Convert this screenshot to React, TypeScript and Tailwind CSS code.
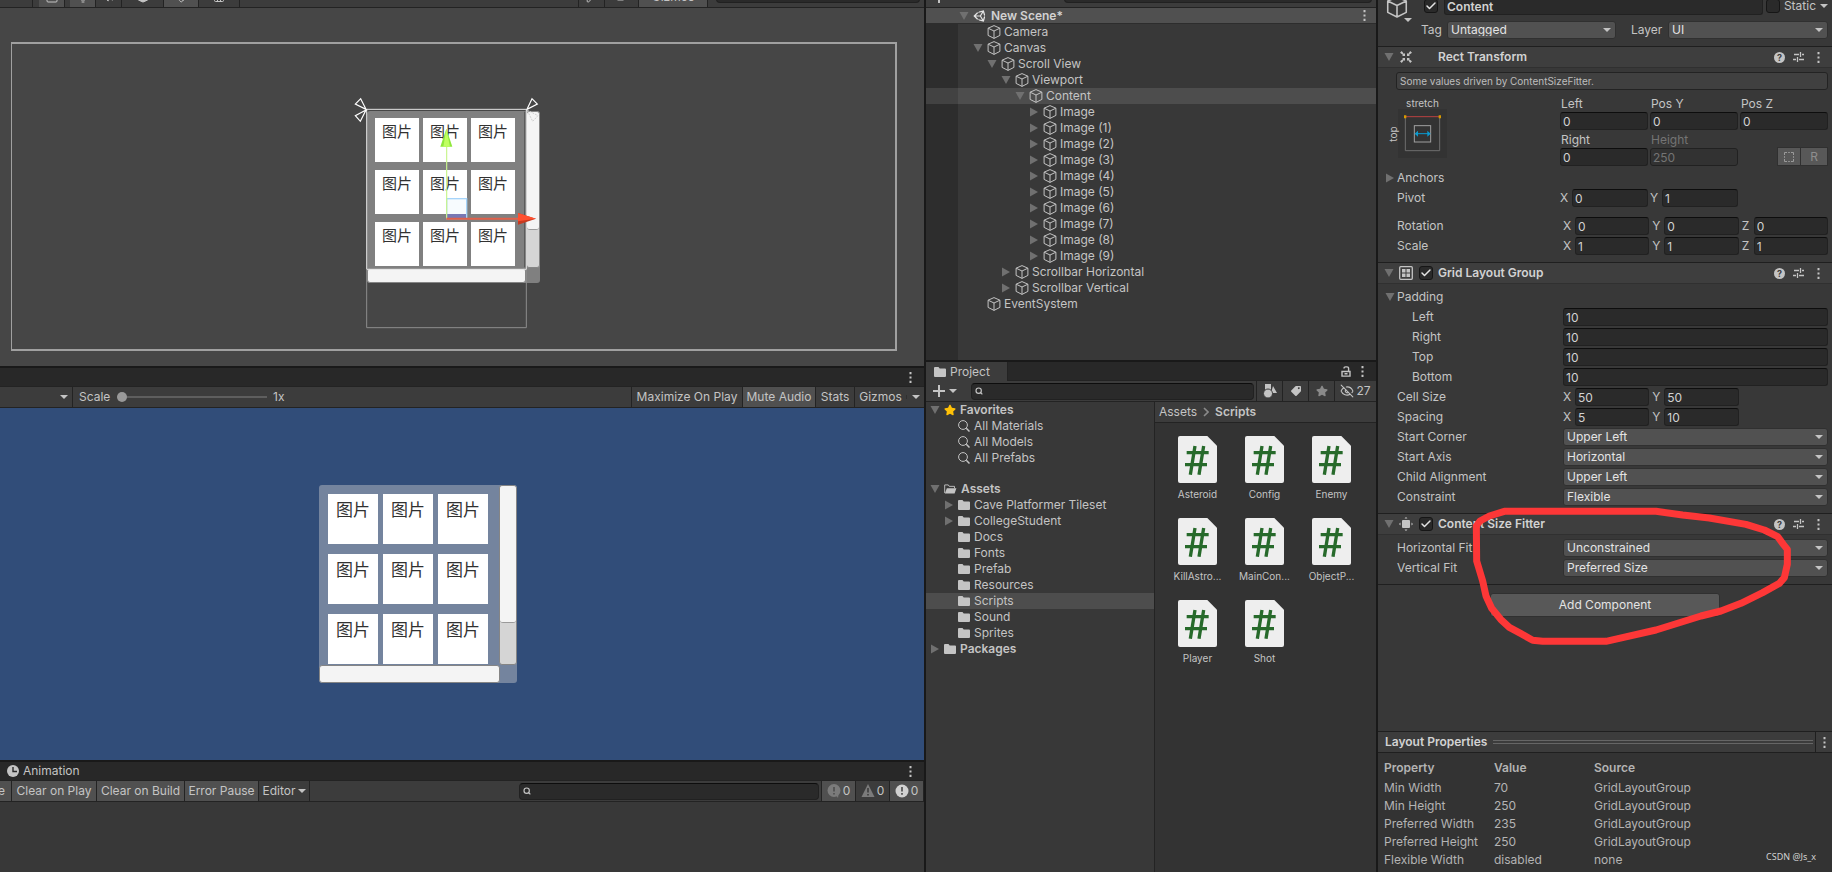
import type { ReactNode } from 'react';
import { Check, EyeOff, Grid3x3, Layers, Lightbulb, Magnet, Search, Volume2, Wrench, Video, Tv } from 'lucide-react';
import { FaUnity, FaStar, FaTag } from 'react-icons/fa';

interface TreeNode {
  name: string;
  depth: number;
  state?: 'open' | 'closed';
  selected?: boolean;
}

interface ProjectNode extends TreeNode {
  icon: 'star' | 'search' | 'folder' | 'open';
  bold?: boolean;
}

const HIERARCHY: TreeNode[] = [
  { name: 'Camera', depth: 0 },
  { name: 'Canvas', depth: 0, state: 'open' },
  { name: 'Scroll View', depth: 1, state: 'open' },
  { name: 'Viewport', depth: 2, state: 'open' },
  { name: 'Content', depth: 3, state: 'open', selected: true },
  { name: 'Image', depth: 4, state: 'closed' },
  { name: 'Image (1)', depth: 4, state: 'closed' },
  { name: 'Image (2)', depth: 4, state: 'closed' },
  { name: 'Image (3)', depth: 4, state: 'closed' },
  { name: 'Image (4)', depth: 4, state: 'closed' },
  { name: 'Image (5)', depth: 4, state: 'closed' },
  { name: 'Image (6)', depth: 4, state: 'closed' },
  { name: 'Image (7)', depth: 4, state: 'closed' },
  { name: 'Image (8)', depth: 4, state: 'closed' },
  { name: 'Image (9)', depth: 4, state: 'closed' },
  { name: 'Scrollbar Horizontal', depth: 2, state: 'closed' },
  { name: 'Scrollbar Vertical', depth: 2, state: 'closed' },
  { name: 'EventSystem', depth: 0 },
];

const FAVORITES: ProjectNode[] = [
  { name: 'Favorites', depth: 0, state: 'open', icon: 'star', bold: true },
  { name: 'All Materials', depth: 1, icon: 'search' },
  { name: 'All Models', depth: 1, icon: 'search' },
  { name: 'All Prefabs', depth: 1, icon: 'search' },
];

const FOLDERS: ProjectNode[] = [
  { name: 'Assets', depth: 0, state: 'open', icon: 'open', bold: true },
  { name: 'Cave Platformer Tileset', depth: 1, state: 'closed', icon: 'folder' },
  { name: 'CollegeStudent', depth: 1, state: 'closed', icon: 'folder' },
  { name: 'Docs', depth: 1, icon: 'folder' },
  { name: 'Fonts', depth: 1, icon: 'folder' },
  { name: 'Prefab', depth: 1, icon: 'folder' },
  { name: 'Resources', depth: 1, icon: 'folder' },
  { name: 'Scripts', depth: 1, icon: 'folder', selected: true },
  { name: 'Sound', depth: 1, icon: 'folder' },
  { name: 'Sprites', depth: 1, icon: 'folder' },
  { name: 'Packages', depth: 0, state: 'closed', icon: 'folder', bold: true },
];

const SCRIPTS = ['Asteroid', 'Config', 'Enemy', 'KillAstro...', 'MainCon...', 'ObjectP...', 'Player', 'Shot'];

const LAYOUT_PROPS = [
  ['Min Width', '70', 'GridLayoutGroup'],
  ['Min Height', '250', 'GridLayoutGroup'],
  ['Preferred Width', '235', 'GridLayoutGroup'],
  ['Preferred Height', '250', 'GridLayoutGroup'],
  ['Flexible Width', 'disabled', 'none'],
];

export default function App() {
  return (
    <div className="flex h-screen overflow-hidden bg-[#191919] font-['Inter','Noto_Sans_CJK_SC',sans-serif] text-xs leading-4 text-[#c4c4c4]">
      <div className="flex min-w-0 flex-1 flex-col">
        <SceneView />
        <GameView />
        <ConsolePanel />
      </div>
      <div className="mx-0.5 flex w-[450px] shrink-0 flex-col">
        <Hierarchy />
        <Project />
      </div>
      <Inspector />
    </div>
  );
}

/* ---------- left column ---------- */

function SceneView() {
  return (
    <section className="flex min-h-0 shrink grow basis-[366px] flex-col">
      <div className="flex h-2 shrink-0 items-end overflow-hidden border-b border-[#232323] bg-[#3c3c3c]">
        <ToolButton className="w-[33px]" />
        <div className="w-1.5" />
        <ToolButton className="w-[26px] bg-[#505050]"><Tv size={12} /></ToolButton>
        <div className="w-[5px]" />
        <ToolButton className="w-[26px] bg-[#505050]"><Lightbulb size={12} fill="#c4c4c4" /></ToolButton>
        <ToolButton className="w-[26px]"><Volume2 size={12} /></ToolButton>
        <ToolButton className="w-[42px]"><Layers size={12} fill="#c4c4c4" /></ToolButton>
        <ToolButton className="w-[35px] bg-[#505050]"><Magnet size={12} /></ToolButton>
        <ToolButton className="w-[41px]"><Grid3x3 size={12} /></ToolButton>
        <div className="h-[21px] flex-1 border-r border-[#232323]" />
        <ToolButton className="w-[26px]"><Wrench size={12} /></ToolButton>
        <ToolButton className="w-[34px]"><Video size={12} /></ToolButton>
        <ToolButton className="w-[69px] bg-[#505050]">Gizmos</ToolButton>
        <div className="ml-2 mr-1 h-[21px] w-[204px]">
          <SearchBox label="Search scene" placeholder="All" />
        </div>
      </div>
      <div className="relative flex-1 overflow-hidden bg-[#464646]">
        <div className="absolute bottom-[15px] left-[11px] right-[27px] top-[34px] border-2 border-l border-[#a0a0a0]" />
        <UiScrollView
          className="absolute left-[367px] top-[103px] h-[172px] w-[173px] bg-[#808080]"
          gridClass="grid-cols-[44px_44px_44px] auto-rows-[44px] gap-x-1 gap-y-2 pl-2 pt-[7px]"
          cellClass="text-[15px] leading-[25px]"
          barClass="w-[14px]"
          handleClass="h-[118px]"
          footClass="h-[15px]"
          footEnd="w-[14px]"
        />
        <SceneGizmo />
      </div>
    </section>
  );
}

function GameView() {
  return (
    <section className="flex min-h-0 shrink grow basis-[394px] flex-col border-t-2 border-[#191919]">
      <div className="flex h-[19px] shrink-0 items-center justify-end border-b border-[#232323] bg-[#282828] pr-3">
        <Dots />
      </div>
      <div className="flex h-[21px] shrink-0 items-center border-b border-[#232323] bg-[#3c3c3c]">
        <div className="flex h-full w-[73px] items-center justify-end border-r border-[#232323] pr-1">
          <DownArrow />
        </div>
        <label htmlFor="scale" className="ml-1.5 w-[38px]">Scale</label>
        <input
          id="scale"
          type="range"
          defaultValue={0}
          className="h-4 w-[150px] appearance-none bg-transparent [&::-webkit-slider-runnable-track]:h-0.5 [&::-webkit-slider-runnable-track]:bg-[#5e5e5e] [&::-webkit-slider-thumb]:-mt-1 [&::-webkit-slider-thumb]:size-2.5 [&::-webkit-slider-thumb]:appearance-none [&::-webkit-slider-thumb]:rounded-full [&::-webkit-slider-thumb]:bg-[#999999]"
        />
        <span className="ml-1.5">1x</span>
        <div className="h-full flex-1 border-r border-[#232323]" />
        <BarButton className="w-[111px]">Maximize On Play</BarButton>
        <BarButton className="w-[73px] bg-[#505050]">Mute Audio</BarButton>
        <BarButton className="w-[39px]">Stats</BarButton>
        <button className="w-[51px]">Gizmos</button>
        <div className="flex w-[18px] items-center justify-center border-l border-[#303030]">
          <DownArrow />
        </div>
      </div>
      <div className="relative flex-1 overflow-hidden bg-[#314d79]">
        <UiScrollView
          className="absolute left-[319px] top-[77px] h-[198px] w-[198px] bg-[#74849e]"
          gridClass="grid-cols-[50px_50px_50px] auto-rows-[50px] gap-x-[5px] gap-y-2.5 pl-[9px] pt-[9px]"
          cellClass="text-[17px] leading-[30px]"
          barClass="w-[18px]"
          handleClass="h-[137px]"
          footClass="h-[18px]"
          footEnd="w-[17px]"
        />
      </div>
    </section>
  );
}

function ConsolePanel() {
  return (
    <section className="flex h-28 shrink-0 flex-col border-t-2 border-[#191919] bg-[#383838]">
      <div className="flex h-[19px] shrink-0 items-center border-b border-[#232323] bg-[#282828] pl-[7px] pr-3">
        <svg viewBox="0 0 12 12" className="size-3">
          <circle cx="6" cy="6" r="6" fill="#c4c4c4" />
          <path d="M6 2v4.5h4" stroke="#282828" strokeWidth="1.4" fill="none" />
        </svg>
        <span className="ml-1">Animation</span>
        <div className="flex-1" />
        <Dots />
      </div>
      <div className="flex h-[21px] shrink-0 items-center border-b border-[#232323] bg-[#3c3c3c]">
        <button className="flex h-full w-3 items-center justify-end overflow-hidden border-r border-[#232323] bg-[#505050] pr-1.5">Collapse</button>
        <BarButton className="w-[85px] bg-[#505050]">Clear on Play</BarButton>
        <BarButton className="w-[88px] bg-[#505050]">Clear on Build</BarButton>
        <BarButton className="w-[74px] bg-[#505050]">Error Pause</BarButton>
        <BarButton className="w-[51px] gap-0.5">Editor<DownArrow /></BarButton>
        <div className="flex-1" />
        <div className="w-[300px]">
          <SearchBox label="Search console" />
        </div>
        <div className="ml-0.5 h-full border-l border-[#232323]" />
        <BarButton className="w-[34px] gap-0.5 bg-[#505050]">
          <svg viewBox="0 0 14 14" className="size-3.5">
            <circle cx="7" cy="6.5" r="6.5" fill="#7b7b7b" />
            <path d="M9 11l2 3 .5-4z" fill="#7b7b7b" />
            <path d="M7 3v4.5M7 9v1.6" stroke="#505050" strokeWidth="1.7" />
          </svg>
          0
        </BarButton>
        <BarButton className="w-[34px] gap-0.5">
          <svg viewBox="0 0 14 14" className="size-3.5">
            <path d="M7 0l6.5 13H.5z" fill="#7b7b7b" />
            <path d="M7 4v4.5M7 10v1.6" stroke="#3c3c3c" strokeWidth="1.6" />
          </svg>
          0
        </BarButton>
        <BarButton className="w-[34px] gap-0.5 bg-[#505050]">
          <svg viewBox="0 0 14 14" className="size-3.5">
            <circle cx="7" cy="7" r="6.5" fill="#d2d2d2" />
            <path d="M7 3v4.5M7 9v1.8" stroke="#505050" strokeWidth="1.7" />
          </svg>
          0
        </BarButton>
      </div>
    </section>
  );
}

interface UiScrollViewProps {
  className: string;
  gridClass: string;
  cellClass: string;
  barClass: string;
  handleClass: string;
  footClass: string;
  footEnd: string;
}

function UiScrollView({ className, gridClass, cellClass, barClass, handleClass, footClass, footEnd }: UiScrollViewProps) {
  return (
    <div className={`flex flex-col overflow-hidden rounded-[3px] text-[#323232] ${className}`}>
      <div className="flex min-h-0 flex-1">
        <div className={`grid flex-1 content-start ${gridClass}`}>
          {Array.from({ length: 9 }, (_, i) => (
            <div key={i} className={`bg-white text-center font-['Noto_Sans_CJK_SC',sans-serif] ${cellClass}`}>图片</div>
          ))}
        </div>
        <div className={`rounded-[3px] border border-[#858585] bg-[#d5d5d5] ${barClass}`}>
          <div className={`rounded-[3px] border-b border-[#9a9a9a] bg-[#f4f4f4] ${handleClass}`} />
        </div>
      </div>
      <div className="flex">
        <div className={`flex-1 rounded-[3px] border border-[#858585] bg-[#f4f4f4] ${footClass}`} />
        <div className={footEnd} />
      </div>
    </div>
  );
}

// Rect outline, anchor handles and the move gizmo of the selected object
function SceneGizmo() {
  return (
    <svg viewBox="0 0 660 780" className="absolute left-[340px] top-[72px] h-[260px] w-[220px]" fill="none">
      <path d="M80 570V743H559V570" stroke="#8c8c8c" strokeWidth="3" />
      <path d="M80 88V568H559V88Z" stroke="#e4e4e4" strokeWidth="3" />
      <path d="M554 95V562" stroke="#555" strokeWidth="3" />
      <g stroke="#fff" strokeWidth="3.5">
        <path d="M78 88L62 56 46 72Z" />
        <path d="M78 90L46 107 61 124Z" />
        <path d="M561 88L576 56 592 72Z" />
      </g>
      <path d="M561 90L594 107 578 124Z" stroke="#cfcfcf" strokeWidth="3" strokeDasharray="6 3" />
      <rect x="320" y="356" width="60" height="60" fill="#bfe0fa" fillOpacity=".12" stroke="#a6d4fa" strokeWidth="4" />
      <rect x="321" y="402" width="57" height="13" fill="#7878b4" />
      <path d="M320 200V416" stroke="#c8f58c" strokeWidth="3.5" />
      <path d="M319 146L301 200H337Z" fill="#8fe83c" />
      <path d="M319 146L310 200H330Z" fill="#c0ff60" />
      <path d="M319 416H536" stroke="#e0604a" strokeWidth="6" />
      <path d="M588 416L534 399V434Z" fill="#c83a20" />
      <path d="M588 416L534 399V424Z" fill="#ff5030" />
    </svg>
  );
}

/* ---------- middle column ---------- */

function Hierarchy() {
  return (
    <section className="flex h-[360px] shrink-0 flex-col bg-[#383838]">
      <div className="flex h-2 shrink-0 items-end overflow-hidden border-b border-[#232323] bg-[#3c3c3c]">
        <button aria-label="Create" className="ml-[7px] mb-1"><PlusIcon /></button>
        <div className="flex-1" />
        <div className="mr-1 h-[21px] w-[308px]">
          <SearchBox label="Search hierarchy" placeholder="All" />
        </div>
      </div>
      <div className="flex h-4 shrink-0 items-center border-b border-[#2d2d2d] bg-[#505050] pl-[33px] pr-2.5">
        <Foldout state="open" />
        <FaUnity className="size-3.5 text-[#e4e4e4]" />
        <span className="ml-1 font-semibold text-[#d2d2d2]">New Scene*</span>
        <div className="flex-1" />
        <Dots />
      </div>
      <div className="flex-1 bg-[linear-gradient(to_right,#2d2d2d_32px,#383838_32px)]">
        {HIERARCHY.map(node => (
          <div
            key={node.name}
            className={node.selected
              ? 'flex h-4 items-center bg-[linear-gradient(to_right,#424242_32px,#4d4d4d_32px)]'
              : 'flex h-4 items-center'}
            style={{ paddingLeft: 47 + node.depth * 14 }}
          >
            <Foldout state={node.state} />
            <CubeIcon className="size-3.5" />
            <span className="ml-[3px]">{node.name}</span>
          </div>
        ))}
      </div>
    </section>
  );
}

function Project() {
  return (
    <section className="flex min-h-0 flex-1 flex-col border-t-2 border-[#191919] bg-[#383838]">
      <div className="flex h-[19px] shrink-0 items-center bg-[#282828] pr-3">
        <div className="flex h-full w-[82px] items-center border-r border-[#232323] bg-[#3c3c3c] pl-2">
          <FolderIcon />
          <span className="ml-1">Project</span>
        </div>
        <div className="flex-1 self-stretch border-b border-[#232323]" />
        <svg viewBox="0 0 10 11" className="mr-2.5 h-[11px] w-2.5" fill="none" stroke="#c4c4c4" strokeWidth="1.4">
          <path d="M1 5.5h8v4.6H1zM7.6 5.5V2.4q0-1.5-1.6-1.5H4.6Q3 .9 3 2.4M3.5 7.8h3" />
        </svg>
        <Dots />
      </div>
      <div className="flex h-[21px] shrink-0 items-center border-b border-[#232323] bg-[#3c3c3c]">
        <button aria-label="Create asset" className="ml-[7px] flex w-[38px] items-center gap-1"><PlusIcon /><DownArrow /></button>
        <div className="flex-1">
          <SearchBox label="Search project" />
        </div>
        <div className="ml-0.5 h-full border-l border-[#232323]" />
        <BarButton className="w-[26px]">
          <svg viewBox="0 0 14 14" className="size-3.5" fill="#c4c4c4">
            <path d="M2 0h6v6H2zM10 2l4 7H8z" />
            <circle cx="5" cy="9.5" r="4.5" stroke="#3c3c3c" />
          </svg>
        </BarButton>
        <BarButton className="w-[26px]"><FaTag className="size-2.5 scale-x-[-1]" /></BarButton>
        <BarButton className="w-[26px]"><FaStar className="size-3 text-[#8a8a8a]" /></BarButton>
        <button className="flex w-[41px] items-center justify-center gap-0.5"><EyeOff size={14} strokeWidth={1.8} />27</button>
      </div>
      <div className="flex min-h-0 flex-1">
        <div className="w-[229px] border-r border-[#232323]">
          {FAVORITES.map(n => <ProjectRow key={n.name} node={n} />)}
          <div className="h-[15px]" />
          {FOLDERS.map(n => <ProjectRow key={n.name} node={n} />)}
        </div>
        <div className="flex-1 bg-[#333333]">
          <div className="flex h-[21px] items-center gap-1.5 border-b border-[#232323] bg-[#3c3c3c] pl-1">
            <a href="#assets">Assets</a>
            <svg viewBox="0 0 6 10" className="h-2.5 w-1.5" fill="none" stroke="#8a8a8a" strokeWidth="1.6"><path d="M1 1l4 4-4 4" /></svg>
            <span className="font-semibold">Scripts</span>
          </div>
          <div className="grid grid-cols-[67px_67px_67px] auto-rows-[82px] pl-[9px] pt-[13px]">
            {SCRIPTS.map(name => (
              <div key={name} className="flex flex-col items-center text-[10px] leading-[22px]">
                <ScriptIcon />
                {name}
              </div>
            ))}
          </div>
        </div>
      </div>
    </section>
  );
}

function ProjectRow({ node }: { node: ProjectNode }) {
  return (
    <div
      className={`flex h-4 items-center whitespace-nowrap ${node.selected ? 'bg-[#4d4d4d]' : ''} ${node.bold ? 'font-semibold' : ''}`}
      style={{ paddingLeft: 4 + node.depth * 14 }}
    >
      <Foldout state={node.state} />
      {node.icon === 'star' && <FaStar className="size-3 text-[#ffc107]" />}
      {node.icon === 'search' && (
        <svg viewBox="0 0 12 12" className="size-3" fill="none" stroke="#c4c4c4"><circle cx="5" cy="5" r="4.4" /><path d="M8.3 8.3l3.2 3.2" strokeWidth="1.5" /></svg>
      )}
      {node.icon === 'folder' && <FolderIcon />}
      {node.icon === 'open' && (
        <svg viewBox="0 0 14 11" className="h-2.5 w-[13px]" fill="none" stroke="#c4c4c4">
          <path d="M.6 10V1h4l1 1.6h5.8v2" />
          <path d="M3 4.6h10.5l-2 5.9H.8z" fill="#c4c4c4" stroke="none" />
        </svg>
      )}
      <span className="ml-1">{node.name}</span>
    </div>
  );
}

/* ---------- inspector ---------- */

function Inspector() {
  return (
    <section className="relative flex w-[454px] shrink-0 flex-col overflow-hidden bg-[#383838]">
      <div className="flex h-[46px] shrink-0 overflow-hidden">
        <div className="flex w-[42px] flex-col items-start justify-end pb-6 pl-2">
          <CubeIcon className="size-[22px] shrink-0" />
          <div className="ml-[18px] shrink-0"><DownArrow /></div>
        </div>
        <div className="flex flex-1 flex-col justify-end gap-1.5 pb-[7px] pr-1">
          <div className="flex h-[18px] shrink-0 items-center pl-1">
            <Toggle label="Active" checked />
            <div className="ml-1.5 mr-[3px] flex-1"><Field label="Name" value="Content" bold /></div>
            <Toggle label="Static" />
            <span className="ml-1 mr-1">Static</span>
            <DownArrow />
          </div>
          <div className="flex h-[18px] shrink-0 items-center">
            <label htmlFor="tag" className="w-[27px] pl-px">Tag</label>
            <div className="flex-1"><Dropdown id="tag" value="Untagged" /></div>
            <label htmlFor="layer" className="ml-[15px] w-[37px]">Layer</label>
            <div className="w-40"><Dropdown id="layer" value="UI" /></div>
          </div>
        </div>
      </div>

      <ComponentHeader
        title="Rect Transform"
        icon={
          <svg viewBox="0 0 14 14" className="size-3.5" fill="#c4c4c4">
            <path d="M6 6V3L4.900 4.100 2.800 1 1 2.800 4.100 4.900 3 6zM8 6V3l1.100 1.100L11.200 1 13 2.800 9.900 4.900 11 6zM6 8v3L4.900 9.900 2.800 13 1 11.200 4.100 9.100 3 8zM8 8v3l1.100-1.100L11.200 13 13 11.200 9.900 9.100 11 8z" />
          </svg>
        }
      />
      <div className="pb-1.5 pl-[18px] pr-1 pt-1">
        <div className="h-[18px] rounded-[3px] border border-[#232323] bg-[#404040] pl-[3px] text-[10px] text-[#bdbdbd]">
          Some values driven by ContentSizeFitter.
        </div>
        <div className="mt-1.5 flex h-[72px]">
          <div className="grid w-[164px] grid-cols-[2px_49px] grid-rows-[13px_49px] text-[10px] leading-[14px]">
            <div className="col-start-2 text-center">stretch</div>
            <div className="col-start-1 row-start-2 flex w-0 items-center justify-center">
              <span className="-rotate-90 pb-1.5">top</span>
            </div>
            <svg viewBox="0 0 147 147" className="col-start-2 row-start-2 size-[49px] bg-[#333333]" fill="none">
              <path d="M22 24V125H125V24" stroke="#6e6e6e" strokeWidth="3" />
              <path d="M22 23H125" stroke="#b84040" strokeWidth="3" />
              <rect x="49" y="50" width="49" height="49" stroke="#a0a0a0" strokeWidth="3" />
              <path d="M55 74H93" stroke="#0a9bd0" strokeWidth="3" />
              <path d="M50 74l10-9v18zM98 74l-10-9v18z" fill="#0a9bd0" />
              <path d="M18 19h7v9h-7zM122 19h7v9h-7z" fill="#d89a00" />
            </svg>
          </div>
          <div className="grid flex-1 grid-cols-3 content-start gap-x-0.5">
            <StackedField label="Left" value="0" />
            <StackedField label="Pos Y" value="0" />
            <StackedField label="Pos Z" value="0" />
            <StackedField label="Right" value="0" />
            <StackedField label="Height" value="250" disabled />
            <div className="flex items-end justify-end pb-0.5">
              <button aria-label="Blueprint mode" className="flex h-[19px] w-6 items-center justify-center border border-[#303030] bg-[#585858]">
                <svg viewBox="0 0 10 10" className="size-2.5"><path d="M.5 3V.5H3M4.200 .5h1.600M7 .5h2.500V3M9.500 4.200v1.600M9.500 7v2.500H7M5.800 9.500H4.200M3 9.500H.5V7M.5 5.800V4.200" fill="none" stroke="#9a9a9a" /></svg>
              </button>
              <button className="h-[19px] w-[27px] border border-l-0 border-[#303030] bg-[#585858] text-[#8e8e8e]">R</button>
            </div>
          </div>
        </div>
        <div className="flex h-5 items-center pl-px">
          <div className="-ml-3 w-3"><Foldout state="closed" /></div>
          Anchors
        </div>
        <div className="flex h-5 items-center">
          <span className="w-[164px] pl-px">Pivot</span>
          <div className="grid flex-1 grid-cols-3 gap-x-0.5">
            <AxisField axis="X" name="Pivot" value="0" />
            <AxisField axis="Y" name="Pivot" value="1" />
          </div>
        </div>
        <div className="h-2" />
        <VectorRow name="Rotation" values={['0', '0', '0']} />
        <VectorRow name="Scale" values={['1', '1', '1']} />
      </div>

      <ComponentHeader
        title="Grid Layout Group"
        toggle
        icon={
          <svg viewBox="0 0 14 14" className="size-3.5">
            <rect x=".7" y=".7" width="12.6" height="12.6" rx="1" fill="none" stroke="#c4c4c4" strokeWidth="1.3" />
            <path d="M3 3h3.5v3.5H3zM7.5 3H11v3.5H7.5zM3 7.5h3.5V11H3zM7.5 7.5H11V11H7.5z" fill="#c4c4c4" />
          </svg>
        }
      />
      <div className="pb-1.5 pl-[18px] pr-1 pt-[3px]">
        <div className="flex h-5 items-center pl-px">
          <div className="-ml-3 w-3"><Foldout state="open" /></div>
          Padding
        </div>
        <FieldRow name="Left" value="10" />
        <FieldRow name="Right" value="10" />
        <FieldRow name="Top" value="10" />
        <FieldRow name="Bottom" value="10" />
        <VectorRow name="Cell Size" values={['50', '50']} />
        <VectorRow name="Spacing" values={['5', '10']} />
        <SelectRow name="Start Corner" value="Upper Left" />
        <SelectRow name="Start Axis" value="Horizontal" />
        <SelectRow name="Child Alignment" value="Upper Left" />
        <SelectRow name="Constraint" value="Flexible" />
      </div>

      <ComponentHeader
        title="Content Size Fitter"
        toggle
        icon={
          <svg viewBox="0 0 14 14" className="size-3.5" fill="#c4c4c4">
            <rect x="3" y="3" width="8" height="8" rx="1" />
            <path d="M5.5 1.5L7 0l1.5 1.5zM5.5 12.5L7 14l1.5-1.5zM1.500 5.500L0 7l1.500 1.500zM12.500 5.500L14 7l-1.500 1.500z" />
          </svg>
        }
      />
      <div className="border-b border-[#1f1f1f] pb-1.5 pl-[18px] pr-1 pt-[3px]">
        <SelectRow name="Horizontal Fit" value="Unconstrained" />
        <SelectRow name="Vertical Fit" value="Preferred Size" />
      </div>
      <button className="mx-auto mt-2 h-6 w-[230px] shrink-0 rounded-[3px] border border-[#303030] bg-[#585858] text-[#e4e4e4]">
        Add Component
      </button>
      <RedCircle />

      <div className="flex-1" />
      <div className="flex h-[22px] shrink-0 items-center border-y border-[#1f1f1f] bg-[#3c3c3c] pl-[7px]">
        <span className="font-semibold text-[#d2d2d2]">Layout Properties</span>
        <div className="ml-1.5 mr-0.5 h-1 flex-1 border-y border-[#666666]" />
        <div className="flex h-full w-[17px] items-center justify-center border-l border-[#1f1f1f]"><Dots /></div>
      </div>
      <div className="h-[119px] shrink-0 bg-[#333333] pl-1.5 pt-1">
        <table className="text-left text-[#b4b4b4]">
          <thead>
            <tr className="h-[22px]">
              <th className="w-[110px] font-semibold">Property</th>
              <th className="w-[100px] font-semibold">Value</th>
              <th className="font-semibold">Source</th>
            </tr>
          </thead>
          <tbody>
            {LAYOUT_PROPS.map(([name, value, source]) => (
              <tr key={name} className="h-[18px]">
                <td>{name}</td>
                <td>{value}</td>
                <td>{source}</td>
              </tr>
            ))}
          </tbody>
        </table>
      </div>
      <span className="absolute bottom-[7px] right-4 font-['Noto_Sans',sans-serif] text-[9px] text-[#d2d2d2]">CSDN @Js_x</span>
    </section>
  );
}

function ComponentHeader({ title, icon, toggle }: { title: string; icon: ReactNode; toggle?: boolean }) {
  return (
    <div className="flex h-[22px] shrink-0 items-center border-b border-t border-b-[#303030] border-t-[#1f1f1f] bg-[#3e3e3e] pl-1.5 pr-3">
      <Foldout state="open" />
      <div className="ml-px w-5">{icon}</div>
      <div className="flex w-[19px]">{toggle && <Toggle label={title} checked />}</div>
      <span className="font-semibold text-[#d2d2d2]">{title}</span>
      <div className="flex-1" />
      <button aria-label="Help" className="flex size-[11px] items-center justify-center rounded-full bg-[#c4c4c4] text-[9px] font-bold leading-none text-[#3e3e3e]">?</button>
      <svg viewBox="0 0 12 12" className="ml-2 mr-3 size-3" stroke="#c4c4c4" strokeWidth="1.3">
        <path d="M0 8.500h3M6 8.500h5M4.500 6v5M1 3.500h5M9 3.500h2M7.500 1v5" />
      </svg>
      <Dots />
    </div>
  );
}

function FieldRow({ name, value }: { name: string; value: string }) {
  return (
    <div className="flex h-5 items-center">
      <span className="w-[167px] pl-4">{name}</span>
      <div className="flex-1"><Field label={name} value={value} /></div>
    </div>
  );
}

function VectorRow({ name, values }: { name: string; values: string[] }) {
  return (
    <div className="flex h-5 items-center">
      <span className="w-[167px] pl-px">{name}</span>
      <div className="grid flex-1 grid-cols-3 gap-x-[3px]">
        {values.map((v, i) => <AxisField key={i} axis={'XYZ'[i]} name={name} value={v} />)}
      </div>
    </div>
  );
}

function SelectRow({ name, value }: { name: string; value: string }) {
  const id = name.toLowerCase().replace(' ', '-');
  return (
    <div className="flex h-5 items-center">
      <label htmlFor={id} className="w-[167px] pl-px">{name}</label>
      <div className="flex-1"><Dropdown id={id} value={value} /></div>
    </div>
  );
}

function AxisField({ axis, name, value }: { axis: string; name: string; value: string }) {
  return (
    <div className="flex items-center">
      <span className="w-3 shrink-0">{axis}</span>
      <Field label={`${name} ${axis}`} value={value} />
    </div>
  );
}

function StackedField({ label, value, disabled }: { label: string; value: string; disabled?: boolean }) {
  return (
    <div className={disabled ? 'h-9 text-[#747474]' : 'h-9'}>
      <div className="h-4 pl-px">{label}</div>
      <Field label={label} value={value} disabled={disabled} />
    </div>
  );
}

function Field({ label, value, bold, disabled }: { label: string; value: string; bold?: boolean; disabled?: boolean }) {
  return (
    <input
      type="text"
      aria-label={label}
      defaultValue={value}
      disabled={disabled}
      className={`block h-[18px] w-full min-w-0 rounded-[3px] border border-[#212121] px-0.5 ${disabled ? 'bg-[#323232] text-[#747474]' : 'border-t-[#0d0d0d] bg-[#2a2a2a] text-[#d2d2d2]'} ${bold ? 'font-semibold' : ''}`}
    />
  );
}

function Dropdown({ id, value }: { id: string; value: string }) {
  return (
    <div className="relative">
      <select id={id} className="block h-[18px] w-full appearance-none rounded-[3px] border border-[#303030] bg-[#515151] pb-0.5 pl-[3px] text-[#e4e4e4]">
        <option>{value}</option>
      </select>
      <div className="pointer-events-none absolute right-[5px] top-[7px]"><DownArrow /></div>
    </div>
  );
}

function Toggle({ label, checked }: { label: string; checked?: boolean }) {
  return (
    <span className="relative block size-3.5">
      <input type="checkbox" aria-label={label} defaultChecked={checked} className="block size-3.5 appearance-none rounded-[3px] border border-[#161616] bg-[#2a2a2a]" />
      {checked && <Check size={12} strokeWidth={3} className="pointer-events-none absolute left-px top-px text-[#e4e4e4]" />}
    </span>
  );
}

// hand-drawn marker round the Content Size Fitter block
function RedCircle() {
  return (
    <svg viewBox="285 50 972 420" className="pointer-events-none absolute left-[93px] top-[506px] h-[140px] w-[324px]">
      <path
        d="M301 110L302 215 320 275 330 320 347 357 374 390 400 414 435 433 470 453 500 456H690L840 422 975 380 1035 365 1095 342 1160 310 1210 282 1225 265 1234 225V180L1222 165 1205 142 1165 122 1110 105 1000 86 920 77 840 66H385L340 80 312 95Z"
        fill="none"
        stroke="#fd3737"
        strokeWidth="21"
        strokeLinejoin="round"
      />
    </svg>
  );
}

/* ---------- shared bits ---------- */

function ToolButton({ className, children }: { className: string; children?: ReactNode }) {
  return (
    <button className={`flex h-[21px] shrink-0 items-center justify-center border-r border-[#232323] ${className}`}>{children}</button>
  );
}

function BarButton({ className, children }: { className: string; children?: ReactNode }) {
  return (
    <button className={`flex h-full shrink-0 items-center justify-center whitespace-nowrap border-r border-[#232323] ${className}`}>{children}</button>
  );
}

function SearchBox({ label, placeholder }: { label: string; placeholder?: string }) {
  return (
    <div className="relative">
      <input
        type="search"
        aria-label={label}
        placeholder={placeholder}
        className="block h-[17px] w-full rounded-[4px] border border-[#212121] border-t-[#0d0d0d] bg-[#2a2a2a] pl-4 placeholder:text-[#8a8a8a]"
      />
      <Search size={8} strokeWidth={3.5} className="absolute left-1 top-1 scale-x-100 text-[#c4c4c4]" />
    </div>
  );
}

function Foldout({ state }: { state?: 'open' | 'closed' }) {
  return (
    <svg viewBox="0 0 14 10" className="h-2.5 w-3.5 shrink-0" fill="#707070">
      {state === 'open' && <path d="M.5 1h9L5 9z" />}
      {state === 'closed' && <path d="M1 .5l8 4.500-8 4.500z" />}
    </svg>
  );
}

function DownArrow() {
  return (
    <svg viewBox="0 0 8 4" className="h-1 w-2 shrink-0" fill="#c4c4c4"><path d="M0 0h8L4 4z" /></svg>
  );
}

function PlusIcon() {
  return (
    <svg viewBox="0 0 12 12" className="size-3" stroke="#c4c4c4" strokeWidth="2"><path d="M6 0v12M0 6h12" /></svg>
  );
}

function Dots() {
  return (
    <svg viewBox="0 0 3 11" className="h-[11px] w-[3px] shrink-0" fill="#c4c4c4"><path d="M.5 0h2v2.200h-2zM.5 4.400h2v2.200h-2zM.5 8.800h2V11h-2z" /></svg>
  );
}

function CubeIcon({ className }: { className: string }) {
  return (
    <svg viewBox="0 0 14 14" className={className} fill="none" stroke="#c4c4c4" strokeLinejoin="round">
      <path d="M7 .6l5.900 2.600v7.200L7 13.400l-5.900-3V3.200zM1.100 3.200L7 6l5.900-2.800M7 6v7.400" />
    </svg>
  );
}

function FolderIcon() {
  return (
    <svg viewBox="0 0 12 10" className="h-2.5 w-3 shrink-0" fill="#c4c4c4"><path d="M0 1q0-1 1-1h3.500l1.200 1.500H11q1 0 1 1V9q0 1-1 1H1q-1 0-1-1z" /></svg>
  );
}

function ScriptIcon() {
  return (
    <svg viewBox="0 0 117 141" className="h-[47px] w-[39px]">
      <path d="M6 0H88L117 29V135Q117 141 111 141H6Q0 141 0 135V6Q0 0 6 0Z" fill="#eeeeee" />
      <path d="M51 30L37 116M77 30L63 116M26 50H92M21 86H87" stroke="#276a2b" strokeWidth="10" />
    </svg>
  );
}
